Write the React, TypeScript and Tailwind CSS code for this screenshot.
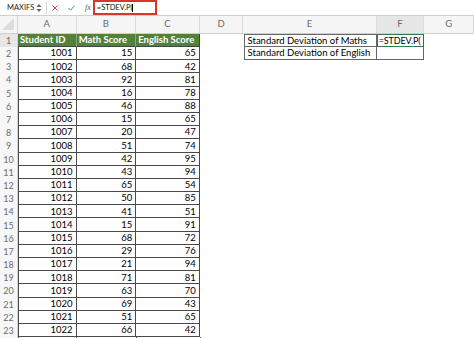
import React from "react";

const COLS = ["A", "B", "C", "D", "E", "F", "G"];
const COL_W = ["w-[59px]", "w-[60px]", "w-[64px]", "w-[44px]", "w-[134px]", "w-[48px]", "w-[50px]"];

const DATA: [number, number, number][] = [
  [1001, 15, 65], [1002, 68, 42], [1003, 92, 81], [1004, 16, 78], [1005, 46, 88],
  [1006, 15, 65], [1007, 20, 47], [1008, 51, 74], [1009, 42, 95], [1010, 43, 94],
  [1011, 65, 54], [1012, 50, 85], [1013, 41, 51], [1014, 15, 91], [1015, 68, 72],
  [1016, 29, 76], [1017, 21, 94], [1018, 71, 81], [1019, 63, 70], [1020, 69, 43],
  [1021, 51, 65], [1022, 66, 42],
];

function FormulaBar() {
  return (
    <div className="flex h-[16px] items-center bg-white border-b border-[#d0d0d0]">
      <div className="w-[36px] pl-[7px] text-[7.5px] text-[#222] leading-none">MAXIFS</div>
      <svg className="w-[6px] h-[10px] text-[#666]" viewBox="0 0 6 10" fill="currentColor">
        <path d="M3 1 L5.5 4 L0.5 4 Z" />
        <path d="M3 9 L5.5 6 L0.5 6 Z" />
      </svg>
      <div className="ml-[4px] w-px h-[12px] bg-[#d4d4d4]" />
      <svg className="ml-[5px] w-[6px] h-[6px]" viewBox="0 0 6 6" stroke="#d2423a" strokeWidth={1} fill="none">
        <path d="M0.5 0.5 L5.5 5.5 M5.5 0.5 L0.5 5.5" />
      </svg>
      <svg className="ml-[10px] w-[7px] h-[6px]" viewBox="0 0 7 6" stroke="#4a9a4a" strokeWidth={1} fill="none">
        <path d="M0.5 3 L2.6 5.2 L6.5 0.6" />
      </svg>
      <span className="ml-[10px] text-[8px] italic text-[#555] leading-none" style={{ fontFamily: "'Liberation Serif', serif" }}>
        fx
      </span>
      <div className="ml-[2px] h-[15px] w-[64px] self-start border-2 border-[#d9372b] flex items-center pl-[2px] text-[7.5px] text-[#111] leading-none">
        =STDEV.P(<span className="w-px h-[8px] bg-black" />
      </div>
    </div>
  );
}

function HeaderRow() {
  return (
    <div className="flex h-[18px] bg-[#f5f5f5] border-b border-[#cfcfcf]">
      <div className="w-[18px] border-r border-[#d6d6d6] relative">
        <svg className="absolute left-[2px] top-[2px] w-[12px] h-[12px]" viewBox="0 0 12 12">
          <path d="M12 0 L12 12 L0 12 Z" fill="#dcdcdc" />
        </svg>
      </div>
      {COLS.map((c, i) => (
        <div
          key={c}
          className={`${COL_W[i]} border-r border-[#dadada] flex items-center justify-center text-[9.5px] text-[#6b6b6b] ${c === "F" ? "bg-[#e6e6e6]" : ""}`}
        >
          {c}
        </div>
      ))}
    </div>
  );
}

function RowHead({ n, active }: { n?: number; active?: boolean }) {
  return (
    <div className={`w-[18px] shrink-0 border-r border-[#d6d6d6] flex items-center justify-center text-[9px] text-[#6b6b6b] ${active ? "bg-[#e6e6e6]" : "bg-[#f7f7f7]"}`}>
      {n}
    </div>
  );
}

export default function App() {
  return (
    <div className="w-[474px] h-[338px] overflow-hidden bg-white" style={{ fontFamily: "Lato, 'Noto Sans', sans-serif" }}>
      <FormulaBar />
      <HeaderRow />

      {/* Row 1: headings */}
      <div className="flex h-[13px] text-[9.5px] leading-none">
        <RowHead n={1} active />
        <div className="w-[59px] bg-[#548235] text-white font-bold flex items-center pl-[2px] border-r border-[#8aa877] border-b border-b-[#444]">Student ID</div>
        <div className="w-[60px] bg-[#548235] text-white font-bold flex items-center pl-[2px] border-r border-[#8aa877] border-b border-b-[#444]">Math Score</div>
        <div className="w-[64px] bg-[#548235] text-white font-bold flex items-center pl-[2px] border-r border-[#444] border-b border-b-[#444]">English Score</div>
        <div className="w-[44px]" />
        <div className="w-[134px] border border-[#666] flex items-center pl-[3px] text-black">Standard Deviation of Maths</div>
        <div className="w-[48px] border border-[#2f7a46] border-r-[#555] flex items-center pl-[1px] text-[9px] tracking-[-0.1px] text-black whitespace-nowrap">=STDEV.P(</div>
        <div className="w-[50px]" />
      </div>

      {DATA.map((row, i) => (
        <div key={row[0]} className="flex h-[13.2px] text-[9.5px] leading-none text-black">
          <RowHead n={i + 2} />
          <div className="w-[59px] border-l border-r border-b border-[#4a4a4a] flex items-center justify-end pr-[3px]">{row[0]}</div>
          <div className="w-[60px] border-r border-b border-[#4a4a4a] flex items-center justify-end pr-[3px]">{row[1]}</div>
          <div className="w-[64px] border-r border-b border-[#4a4a4a] flex items-center justify-end pr-[3px]">{row[2]}</div>
          <div className="w-[44px]" />
          {i === 0 ? (
            <>
              <div className="w-[134px] border-l border-r border-b border-[#666] flex items-center pl-[3px]">Standard Deviation of English</div>
              <div className="w-[48px] border-r border-b border-[#666]" />
            </>
          ) : (
            <>
              <div className="w-[134px]" />
              <div className="w-[48px]" />
            </>
          )}
          <div className="w-[50px]" />
        </div>
      ))}

      {/* Row 24, only its top edge shows */}
      <div className="flex h-[13.2px]">
        <RowHead />
        <div className="w-[59px] border-l border-r border-[#4a4a4a]" />
        <div className="w-[60px] border-r border-[#4a4a4a]" />
        <div className="w-[64px] border-r border-[#4a4a4a]" />
      </div>
    </div>
  );
}
